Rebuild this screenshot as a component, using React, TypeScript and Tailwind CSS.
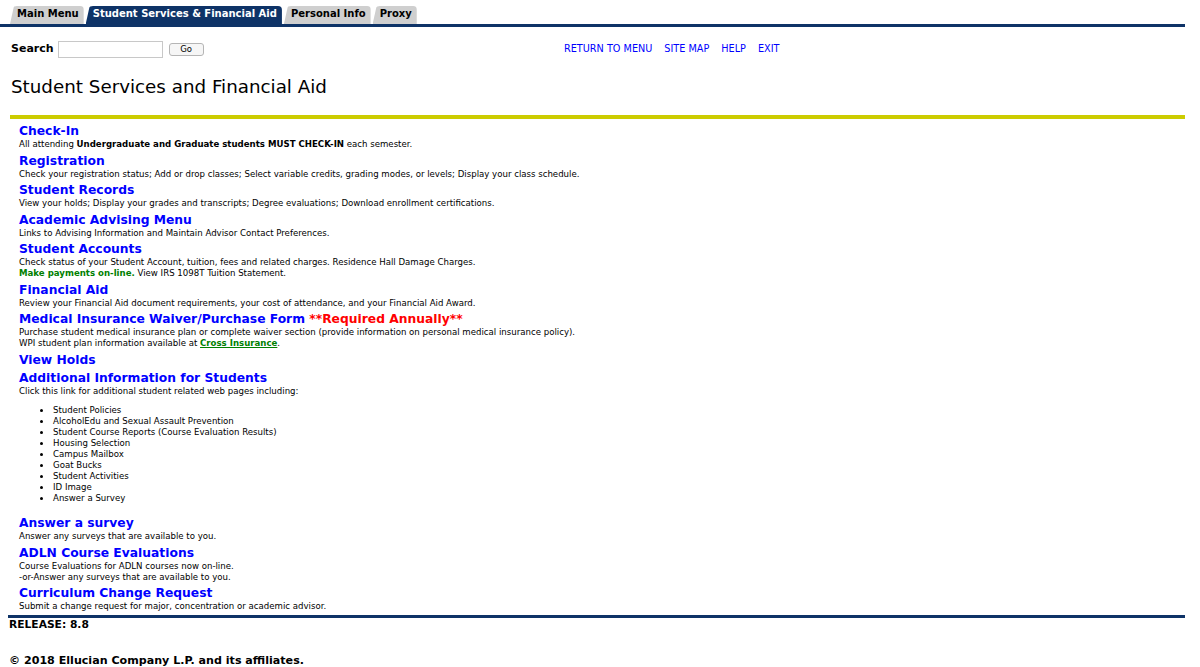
import React from "react";

type MenuItem = {
    title: React.ReactNode;
    lines?: React.ReactNode[];
};

const tabs = [
    { label: "Main Menu", active: false },
    { label: "Student Services & Financial Aid", active: true },
    { label: "Personal Info", active: false },
    { label: "Proxy", active: false },
];

const navLinks = ["RETURN TO MENU", "SITE MAP", "HELP", "EXIT"];

const extraLinks = [
    "Student Policies",
    "AlcoholEdu and Sexual Assault Prevention",
    "Student Course Reports (Course Evaluation Results)",
    "Housing Selection",
    "Campus Mailbox",
    "Goat Bucks",
    "Student Activities",
    "ID Image",
    "Answer a Survey",
];

const topItems: MenuItem[] = [
    {
        title: "Check-In",
        lines: [
            <>
                All attending <b>Undergraduate and Graduate students MUST CHECK-IN</b> each semester.
            </>,
        ],
    },
    {
        title: "Registration",
        lines: [
            "Check your registration status; Add or drop classes; Select variable credits, grading modes, or levels; Display your class schedule.",
        ],
    },
    {
        title: "Student Records",
        lines: ["View your holds; Display your grades and transcripts; Degree evaluations; Download enrollment certifications."],
    },
    {
        title: "Academic Advising Menu",
        lines: ["Links to Advising Information and Maintain Advisor Contact Preferences."],
    },
    {
        title: "Student Accounts",
        lines: [
            "Check status of your Student Account, tuition, fees and related charges. Residence Hall Damage Charges.",
            <>
                <b className="text-[#008000]">Make payments on-line.</b> View IRS 1098T Tuition Statement.
            </>,
        ],
    },
    {
        title: "Financial Aid",
        lines: ["Review your Financial Aid document requirements, your cost of attendance, and your Financial Aid Award."],
    },
    {
        title: (
            <>
                Medical Insurance Waiver/Purchase Form <span className="text-[#ff0000]">**Required Annually**</span>
            </>
        ),
        lines: [
            "Purchase student medical insurance plan or complete waiver section (provide information on personal medical insurance policy).",
            <>
                WPI student plan information available at{" "}
                <a className="font-bold text-[#008000] underline">Cross Insurance</a>.
            </>,
        ],
    },
    { title: "View Holds" },
];

const bottomItems: MenuItem[] = [
    {
        title: "Answer a survey",
        lines: ["Answer any surveys that are available to you."],
    },
    {
        title: "ADLN Course Evaluations",
        lines: ["Course Evaluations for ADLN courses now on-line.", "-or-Answer any surveys that are available to you."],
    },
    {
        title: "Curriculum Change Request",
        lines: ["Submit a change request for major, concentration or academic advisor."],
    },
];

const MenuEntry = ({ item }: { item: MenuItem }) => (
    <div className="mb-[2.5px]">
        <a className="block text-[12.3px] leading-[16px] font-bold text-[#0000ff] cursor-pointer">{item.title}</a>
        {item.lines?.map((line, i) => (
            <div key={i} className="text-[8.6px] leading-[11px] text-black">
                {line}
            </div>
        ))}
    </div>
);

export default function App() {
    return (
        <div className="w-[1185px] min-h-[667px] bg-white text-black font-['DejaVu_Sans',Verdana,sans-serif]">
            {/* tab strip */}
            <div className="flex items-end gap-[2px] pl-[10px] h-[24px]">
                {tabs.map((tab) => (
                    <div
                        key={tab.label}
                        className={`h-[18px] pl-[7px] pr-[5px] pb-[4px] flex items-center text-[10px] font-bold rounded-tl-[7px] rounded-tr-[4px] [clip-path:polygon(4px_0,100%_0,100%_100%,0_100%)] ${
                            tab.active ? "bg-[#0e3367] text-white" : "bg-[#cfcfcf] text-black"
                        }`}
                    >
                        {tab.label}
                    </div>
                ))}
            </div>
            <div className="h-[3px] bg-[#0e3367]" />

            {/* search + nav links */}
            <div className="flex items-center mt-[10px] h-[24px]">
                <div className="flex items-center w-[564px] pl-[11px]">
                    <span className="text-[11px] font-bold">Search</span>
                    <input
                        type="text"
                        className="ml-[4px] w-[105px] h-[17px] border border-[#c8c8c8] bg-white"
                    />
                    <button className="ml-[6px] w-[35px] h-[13px] border border-[#b5b5b5] rounded-[3px] bg-[#f6f6f6] text-[8.5px] leading-[11px]">
                        Go
                    </button>
                </div>
                <div className="flex gap-[12px] text-[9.7px] text-[#0000ff]">
                    {navLinks.map((l) => (
                        <a key={l} className="cursor-pointer">
                            {l}
                        </a>
                    ))}
                </div>
            </div>

            {/* page title */}
            <h1 className="pl-[11px] pt-[14px] pb-[16px] text-[18.3px] leading-[24px] font-normal">
                Student Services and Financial Aid
            </h1>
            <div className="ml-[10px] h-[4px] bg-[#cccc00]" />

            {/* menu */}
            <div className="pl-[19px] pt-[4px]">
                {topItems.map((item, i) => (
                    <MenuEntry key={i} item={item} />
                ))}

                <div>
                    <a className="block text-[12.3px] leading-[16px] font-bold text-[#0000ff] cursor-pointer">
                        Additional Information for Students
                    </a>
                    <div className="text-[8.6px] leading-[11px]">
                        Click this link for additional student related web pages including:
                    </div>
                    <ul className="mt-[8px] mb-[11px] pl-[33px] list-disc text-[8.6px] leading-[11px]">
                        {extraLinks.map((l) => (
                            <li key={l} className="pl-[1px]">
                                {l}
                            </li>
                        ))}
                    </ul>
                </div>

                {bottomItems.map((item, i) => (
                    <MenuEntry key={i} item={item} />
                ))}
            </div>

            {/* footer */}
            <div className="ml-[8px] h-[3px] bg-[#0e3367]" />
            <div className="pl-[9px] text-[10.7px] font-bold leading-[14px]">RELEASE: 8.8</div>
            <div className="pl-[9px] pt-[22px] text-[11.1px] font-bold leading-[14px]">
                © 2018 Ellucian Company L.P. and its affiliates.
            </div>
        </div>
    );
}
